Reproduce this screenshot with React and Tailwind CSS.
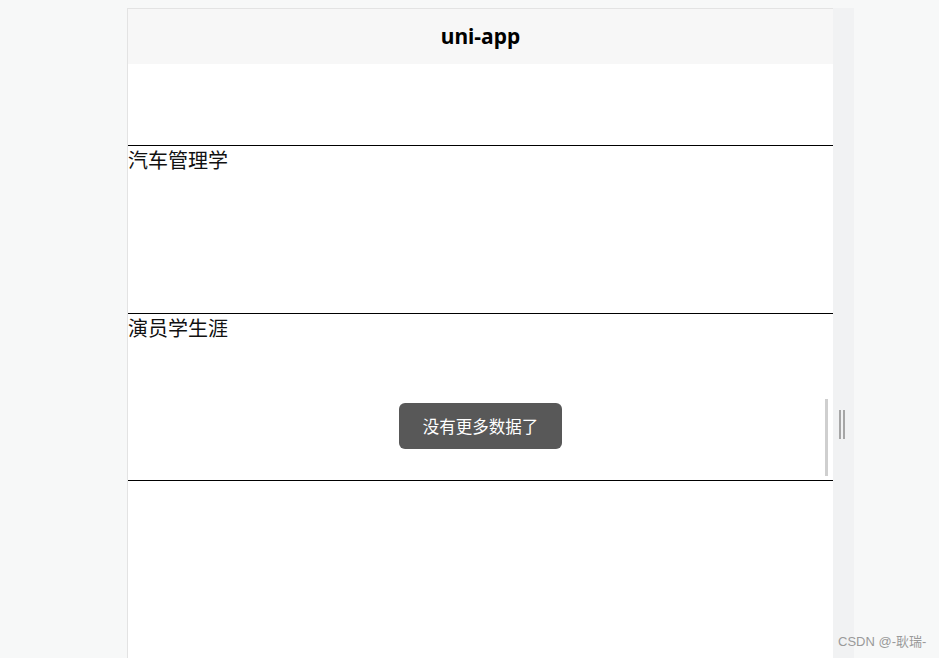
export default function App() {
  const items = [
    { name: '汽车管理学', h: 'h-[168px]' },
    { name: '演员学生涯', h: 'h-[167px]' },
  ];
  return (
    <div className="h-[658px] w-[939px] overflow-hidden bg-[#f7f8f8] relative" style={{ fontFamily: '"Noto Sans", "Noto Sans CJK SC", sans-serif' }}>
      <div className="flex ml-[127px] mt-[8px] h-[650px]">
        {/* Phone frame */}
        <div className="w-[706px] h-full bg-white border-l border-t border-[#e3e3e3] flex flex-col relative">
          <div className="h-[55px] bg-[#f7f7f7] flex items-center justify-center">
            <span className="text-[21px] font-bold text-[#000]">uni-app</span>
          </div>
          <div className="h-[81px]" />
          {items.map(({ name, h }) => (
            <div key={name} className={`${h} border-t border-black`}>
              <div className="text-[20px] leading-[28px] text-[#111]" style={{ fontFamily: '"Noto Sans CJK SC", sans-serif' }}>
                {name}
              </div>
            </div>
          ))}
          <div className="border-t border-black flex-1" />

          {/* Toast */}
          <div className="absolute left-[271px] top-[394px] w-[163px] h-[46px] rounded-[6px] bg-[#585858] flex items-center justify-center">
            <span className="text-white text-[16.5px]" style={{ fontFamily: '"Noto Sans CJK SC", sans-serif' }}>没有更多数据了</span>
          </div>

          {/* Scroll indicator */}
          <div className="absolute left-[697px] top-[390px] w-[3px] h-[77px] bg-[#cfcfcf]" />
        </div>

        {/* Right gutter */}
        <div className="w-[21px] h-full bg-[#f1f2f3] flex items-start justify-center pt-[402px]">
          <div className="flex gap-[2px] ml-[-3px]">
            <div className="w-[2px] h-[29px] bg-[#a6a6a6]" />
            <div className="w-[2px] h-[29px] bg-[#a6a6a6]" />
          </div>
        </div>
      </div>

      {/* Watermark */}
      <div className="absolute left-[838px] top-[632px] text-[13px] text-[#9a9a9a]" style={{ fontFamily: '"Liberation Sans", "Noto Sans CJK SC", sans-serif' }}>
        CSDN @-耿瑞-
      </div>
    </div>
  );
}
